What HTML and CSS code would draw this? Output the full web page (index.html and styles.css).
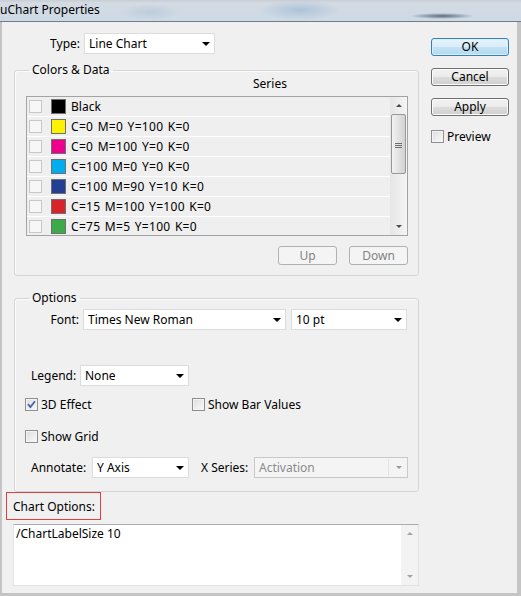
FILE: index.html
```html
<!DOCTYPE html>
<html>
<head>
<meta charset="utf-8">
<title>uChart Properties</title>
<link rel="stylesheet" href="styles.css">
</head>
<body>
<div class="window">
  <div class="titlebar"><span class="title">uChart Properties</span></div>
  <div class="client">
    <div class="main">
      <div class="type-row">
        <span class="lbl lbl-type">Type:</span>
        <div class="select sel-type"><span class="val">Line Chart</span><i class="arrow"></i></div>
      </div>

      <fieldset class="group colors">
        <legend>Colors &amp; Data</legend>
        <div class="series-title">Series</div>
        <div class="listbox">
          <div class="rows">
            <div class="item"><span class="cb cb-list"></span><span class="sw sw-black"></span><span class="txt">Black</span></div>
            <div class="item"><span class="cb cb-list"></span><span class="sw sw-yellow"></span><span class="txt num">C=0 M=0 Y=100 K=0</span></div>
            <div class="item"><span class="cb cb-list"></span><span class="sw sw-magenta"></span><span class="txt num">C=0 M=100 Y=0 K=0</span></div>
            <div class="item"><span class="cb cb-list"></span><span class="sw sw-cyan"></span><span class="txt num">C=100 M=0 Y=0 K=0</span></div>
            <div class="item"><span class="cb cb-list"></span><span class="sw sw-blue"></span><span class="txt num">C=100 M=90 Y=10 K=0</span></div>
            <div class="item"><span class="cb cb-list"></span><span class="sw sw-red"></span><span class="txt num">C=15 M=100 Y=100 K=0</span></div>
            <div class="item"><span class="cb cb-list"></span><span class="sw sw-green"></span><span class="txt num">C=75 M=5 Y=100 K=0</span></div>
          </div>
          <div class="vscroll">
            <div class="sb-btn"><i class="tri-up"></i></div>
            <div class="thumb"><span class="grip"></span></div>
            <div class="sb-track"></div>
            <div class="sb-btn"><i class="tri-down"></i></div>
          </div>
        </div>
        <div class="updown">
          <div class="btn disabled">Up</div>
          <div class="btn disabled">Down</div>
        </div>
      </fieldset>

      <fieldset class="group options">
        <legend>Options</legend>
        <div class="font-row">
          <span class="lbl lbl-font">Font:</span>
          <div class="select sel-font"><span class="val">Times New Roman</span><i class="arrow"></i></div>
          <div class="select sel-size"><span class="val">10 pt</span><i class="arrow"></i></div>
        </div>
        <div class="legend-row">
          <span class="lbl lbl-legend">Legend:</span>
          <div class="select sel-legend"><span class="val">None</span><i class="arrow"></i></div>
        </div>
        <div class="check-row first">
          <label class="check check-3d"><span class="cb checked"><svg width="11" height="11" viewBox="0 0 11 11"><path d="M2 5.2 L4.4 8 L9 2.2" fill="none" stroke="#4a62a8" stroke-width="1.8"/></svg></span><span class="ctext">3D Effect</span></label>
          <label class="check"><span class="cb"></span><span class="ctext">Show Bar Values</span></label>
        </div>
        <div class="check-row second">
          <label class="check"><span class="cb"></span><span class="ctext">Show Grid</span></label>
        </div>
        <div class="annotate-row">
          <span class="lbl lbl-annotate">Annotate:</span>
          <div class="select sel-annotate"><span class="val">Y Axis</span><i class="arrow"></i></div>
          <span class="lbl lbl-xseries">X Series:</span>
          <div class="select sel-xseries disabled"><span class="val">Activation</span><span class="sep"></span><i class="arrow"></i></div>
        </div>
      </fieldset>

      <div class="chart-opts">Chart Options:</div>
      <div class="textarea">
        <div class="ta-text">/ChartLabelSize 10</div>
        <div class="ta-scroll">
          <div class="sb-btn"><i class="tri-up light"></i></div>
          <div class="sb-track"></div>
          <div class="sb-btn"><i class="tri-down light"></i></div>
        </div>
      </div>
    </div>

    <div class="side">
      <div class="btn default">OK</div>
      <div class="btn">Cancel</div>
      <div class="btn">Apply</div>
      <label class="check preview"><span class="cb"></span><span class="ctext">Preview</span></label>
    </div>
  </div>
</div>
</body>
</html>
```

FILE: styles.css
```css
* { box-sizing: border-box; }
html, body { margin: 0; padding: 0; }
body {
  width: 521px;
  height: 596px;
  overflow: hidden;
  background: #f0f0f0;
  font-family: "Noto Sans", "Open Sans", sans-serif;
  font-size: 12px;
  color: #000;
}
.window {
  width: 521px;
  height: 596px;
  display: flex;
  flex-direction: column;
}
.titlebar {
  height: 22px;
  flex: none;
  border-bottom: 1px solid #6e7d8c;
  background:
    radial-gradient(ellipse 32px 3px at 442px 16px, rgba(70,85,105,0.85), rgba(70,85,105,0) 100%),
    radial-gradient(ellipse 40px 10px at 300px 10px, rgba(150,180,210,0.6), rgba(150,180,210,0)),
    radial-gradient(ellipse 30px 8px at 150px 12px, rgba(170,190,210,0.5), rgba(170,190,210,0)),
    linear-gradient(to bottom, #c9cdd2 0px, #d3dbe3 3px, #cdd9e5 100%);
  display: flex;
  align-items: center;
}
.title {
  line-height: 16px;
  margin-top: -2px;
  color: #000;
}
.client {
  flex: 1;
  display: flex;
  align-items: flex-start;
  background: #f0f0f0;
  border-left: 2px solid #c4c4c4;
  border-right: 4px solid #c4c4c4;
  border-bottom: 3px solid #c4c4c4;
}
.main {
  width: 413px;
  margin-left: 4px;
  flex: none;
}

/* generic */
.lbl { flex: none; line-height: 16px; white-space: nowrap; }
.select {
  flex: none;
  height: 21px;
  background: #fff;
  border: 1px solid #dcdcdc;
  display: flex;
  align-items: center;
  padding-left: 4px;
  white-space: nowrap;
}
.select .val { line-height: 16px; }
.arrow {
  margin-left: auto;
  margin-right: 4px;
  width: 0;
  height: 0;
  border-left: 4px solid transparent;
  border-right: 4px solid transparent;
  border-top: 4px solid #000;
}
.select.disabled { background: #f4f4f4; border-color: #c9c9c9; color: #8c8c8c; }
.select.disabled .sep { margin-left: auto; width: 1px; height: 17px; background: #e4e4e4; }
.select.disabled .arrow { margin-left: 7px; margin-right: 5px; border-top-color: #9a9a9a; border-left-width: 3px; border-right-width: 3px; border-top-width: 3px; }

/* type row */
.type-row { margin-top: 11px; display: flex; align-items: center; height: 21px; }
.lbl-type { width: 74px; text-align: right; margin-right: 4px; }
.sel-type { width: 131px; }

/* group box */
fieldset.group {
  margin: 9px 0 0 8px;
  width: 405px;
  border: 1px solid #d5d5d5;
  border-radius: 3px;
  box-shadow: inset 1px 1px 0 #fbfbfb;
  padding: 0;
  min-width: 0;
}
fieldset.group legend {
  margin-left: 14px;
  padding: 0 3px;
  line-height: 14px;
}
fieldset.options { margin-top: 15px; }

/* colors & data */
.series-title { margin: 0 0 0 238px; line-height: 14px; }
.listbox {
  margin: 5px 0 0 11px;
  width: 382px;
  height: 140px;
  border: 1px solid #a3a3a3;
  display: flex;
  overflow: hidden;
  background: #fff;
}
.rows { flex: 1; }
.item {
  height: 20px;
  border-bottom: 1px solid #fff;
  background: #efefef;
  display: flex;
  align-items: center;
  padding-left: 2px;
}
.cb {
  flex: none;
  width: 13px;
  height: 13px;
  border: 1px solid #8e8f8f;
  background: linear-gradient(135deg, #dcdcdc, #fbfbfb);
  box-shadow: inset 0 0 0 1px #f4f4f4;
  display: inline-flex;
  align-items: center;
  justify-content: center;
}
.cb-list { border-color: #c8c8c8; background: #f7f7f7; box-shadow: none; }
.sw {
  flex: none;
  width: 15px;
  height: 15px;
  margin-left: 9px;
  border: 1px solid #6f6f6f;
}
.sw-black { background: #000; }
.sw-yellow { background: #fff200; }
.sw-magenta { background: #ec008c; }
.sw-cyan { background: #00aeef; }
.sw-blue { background: #233f94; }
.sw-red { background: #d7232a; }
.sw-green { background: #3baa48; }
.item .txt { margin-left: 5px; line-height: 16px; white-space: nowrap; }
.item .txt.num { letter-spacing: 0.3px; word-spacing: 1px; }

.vscroll {
  width: 17px;
  flex: none;
  display: flex;
  flex-direction: column;
  background: linear-gradient(to right, #e6e6e6, #f4f4f4);
}
.sb-btn {
  height: 17px;
  flex: none;
  display: flex;
  align-items: center;
  justify-content: center;
}
.sb-track { flex: 1; }
.tri-up, .tri-down {
  width: 0;
  height: 0;
  border-left: 3px solid transparent;
  border-right: 3px solid transparent;
}
.tri-up { border-bottom: 3px solid #4a4a4a; }
.tri-down { border-top: 3px solid #4a4a4a; }
.tri-up.light { border-bottom-color: #a3a3a3; }
.tri-down.light { border-top-color: #a3a3a3; }
.thumb {
  height: 60px;
  flex: none;
  margin: 0 1px;
  border: 1px solid #979797;
  border-radius: 2px;
  background: linear-gradient(to right, #f2f2f2, #e2e2e2 50%, #d2d2d2);
  display: flex;
  align-items: center;
  justify-content: center;
  padding-top: 2px;
}
.grip {
  width: 7px;
  height: 5px;
  border-top: 1px solid #6d6d6d;
  border-bottom: 1px solid #6d6d6d;
  background: linear-gradient(to bottom, transparent 1px, #6d6d6d 1px, #6d6d6d 2px, transparent 2px);
}

.updown {
  display: flex;
  justify-content: flex-end;
  gap: 12px;
  margin-top: 10px;
  padding-right: 10px;
  padding-bottom: 10px;
}

/* buttons */
.btn {
  flex: none;
  height: 18px;
  border: 1px solid #707070;
  border-radius: 3px;
  background: linear-gradient(to bottom, #f2f2f2 0%, #ebebeb 50%, #dddddd 50%, #cfcfcf 100%);
  box-shadow: inset 0 0 0 1px #fbfbfb;
  display: flex;
  align-items: center;
  justify-content: center;
  line-height: 16px;
}
.updown .btn { width: 59px; height: 19px; }
.btn.disabled {
  background: #f4f4f4;
  border-color: #adb2b5;
  color: #838383;
  box-shadow: none;
}
.btn.default {
  border-color: #3c7fb1;
  background: linear-gradient(to bottom, #e6f3fb 0%, #d9edf8 50%, #c3e3f5 50%, #b4d9ef 100%);
  box-shadow: inset 0 0 0 1px #d6f0fe;
}

/* options */
.font-row { margin-top: 4px; display: flex; align-items: center; }
.lbl-font { width: 64px; text-align: right; margin-right: 4px; }
.sel-font { width: 203px; }
.sel-size { width: 116px; margin-left: 5px; }
.legend-row { margin-top: 35px; padding-left: 16px; display: flex; align-items: center; }
.lbl-legend { width: 45px; margin-right: 4px; }
.sel-legend { width: 109px; }

.check-row { display: flex; align-items: center; height: 13px; padding-left: 10px; }
.check-row.first { margin-top: 12px; }
.check-row.second { margin-top: 19px; }
.check { display: flex; align-items: center; height: 13px; }
.check .ctext { margin-left: 3px; line-height: 16px; white-space: nowrap; }
.check-3d { width: 167px; flex: none; }
.cb.checked svg { display: block; }

.annotate-row { margin-top: 14px; padding-left: 16px; padding-bottom: 13px; display: flex; align-items: center; }
.lbl-annotate { width: 57px; margin-right: 4px; }
.sel-annotate { width: 97px; }
.lbl-xseries { width: 49px; margin-left: 12px; margin-right: 4px; }
.sel-xseries { width: 154px; }

/* chart options */
.chart-opts {
  width: 95px;
  height: 28px;
  border: 1px solid #e04040;
  padding-left: 6px;
  padding-top: 6px;
  line-height: 16px;
  white-space: nowrap;
}
.textarea {
  margin: 4px 0 0 7px;
  width: 406px;
  height: 62px;
  background: #fff;
  border: 1px solid #e2e3ea;
  border-top-color: #abadb3;
  display: flex;
}
.ta-text { flex: 1; padding: 1px 0 0 2px; line-height: 16px; }
.ta-scroll {
  width: 17px;
  flex: none;
  display: flex;
  flex-direction: column;
  background: #f3f3f3;
}

/* side */
.side {
  margin-left: 12px;
  margin-top: 16px;
  width: 78px;
  flex: none;
  display: flex;
  flex-direction: column;
  gap: 12px;
}
.side .btn { width: 78px; }
.check.preview { margin-top: 2px; }
```
